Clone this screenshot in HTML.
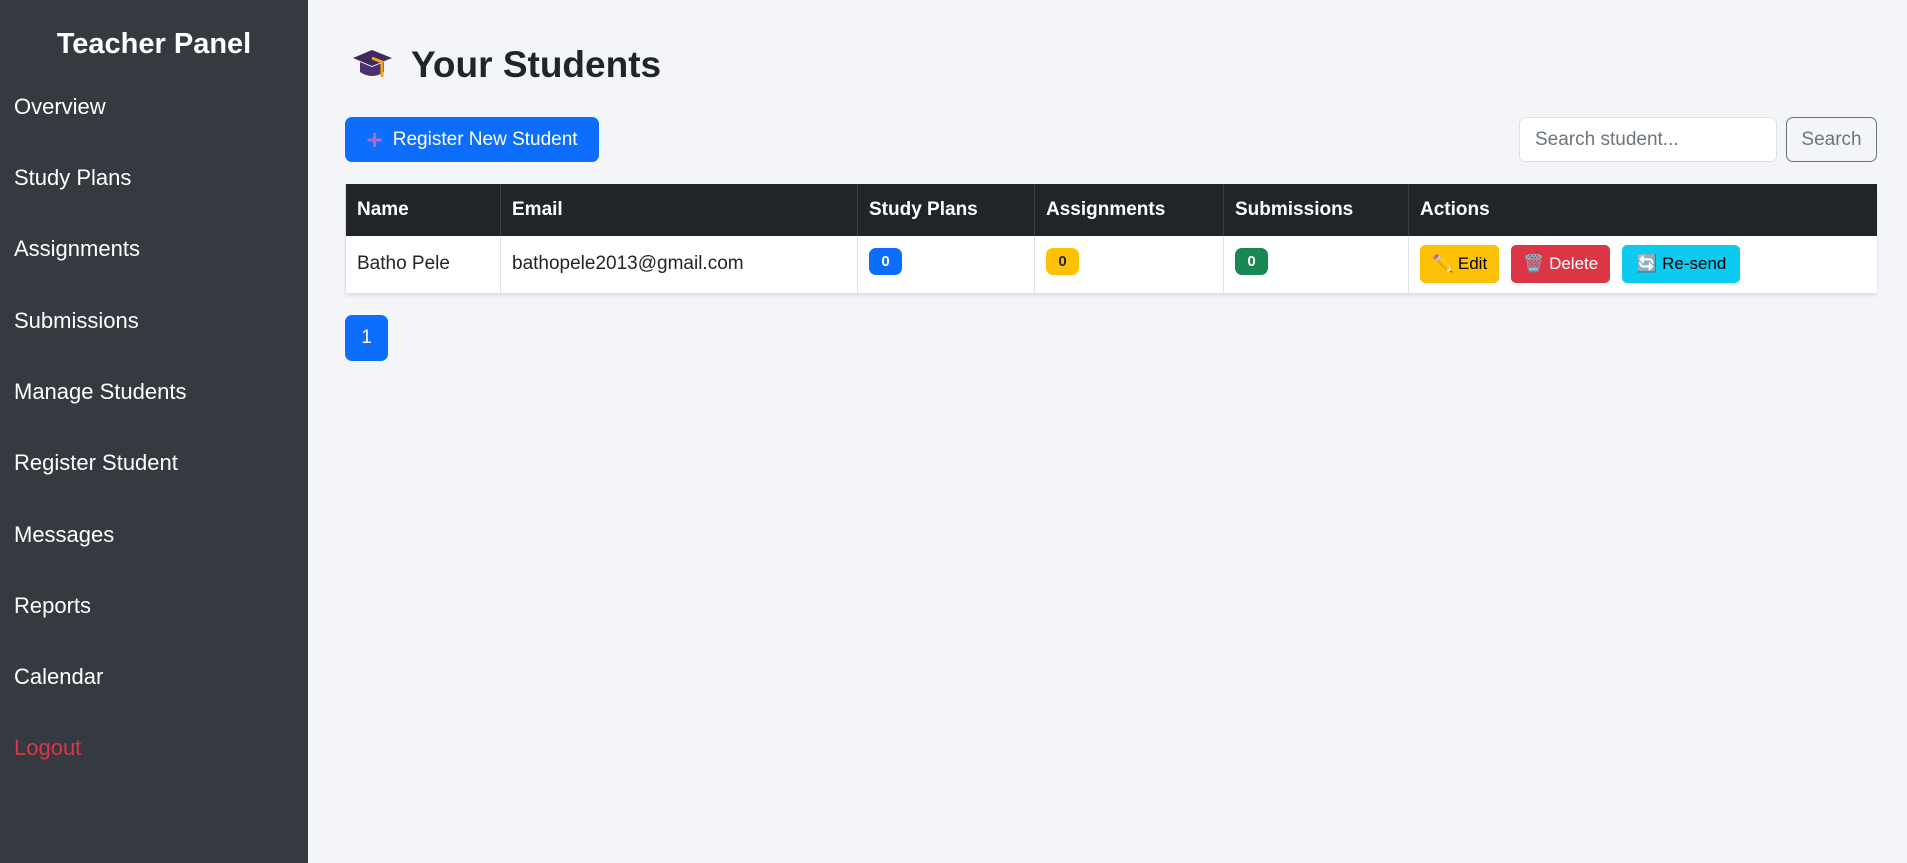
<!DOCTYPE html>
<html><head><meta charset="utf-8">
<style>
*{box-sizing:border-box;margin:0;padding:0}
body{width:1907px;height:863px;overflow:hidden;background:#f4f5f8;font-family:"Liberation Sans","DejaVu Sans",sans-serif;color:#212529;position:relative}
.side{position:absolute;left:0;top:0;width:308px;height:863px;background:#343a40;color:#fff}
.side h4{position:absolute;left:0;width:308px;top:28px;text-align:center;font-size:29px;font-weight:bold}
.side a{position:absolute;left:14px;font-size:22px;color:#fff;text-decoration:none;line-height:26px}
.abs{position:absolute}
h2{position:absolute;left:411px;top:41px;font-size:37px;font-weight:600;line-height:48px}
.btn{position:absolute;border-radius:7px;display:flex;align-items:center;justify-content:center;font-size:19px}
table{position:absolute;left:345px;top:184px;width:1532px;border-collapse:collapse;background:#fff;box-shadow:0 2px 3px rgba(0,0,0,.08)}
th{background:#212529;color:#fff;font-weight:bold;text-align:left;height:52px;padding:0 11px;font-size:19px;border-left:1px solid #3b4047}
td{height:57px;padding:0 11px;font-size:19px;border-left:1px solid #dee2e6;border-bottom:1px solid #dee2e6;vertical-align:middle}
th:first-child,td:first-child{border-left:1px solid #dee2e6}
.badge{display:inline-block;width:33px;height:27px;border-radius:7px;color:#fff;font-weight:bold;font-size:15px;text-align:center;line-height:27px;margin-top:-6px;vertical-align:middle}
.ab{display:inline-flex;align-items:center;height:38px;border-radius:5px;padding:0 12px;font-size:17px;margin-right:12px;vertical-align:middle}
</style></head><body>
<div class="side">
<h4>Teacher Panel</h4>
<a style="top:94px">Overview</a>
<a style="top:165px">Study Plans</a>
<a style="top:236px">Assignments</a>
<a style="top:308px">Submissions</a>
<a style="top:379px">Manage Students</a>
<a style="top:450px">Register Student</a>
<a style="top:522px">Messages</a>
<a style="top:593px">Reports</a>
<a style="top:664px">Calendar</a>
<a style="top:735px;color:#dc3545">Logout</a>
</div>
<svg class="abs" style="left:351px;top:46px" width="44" height="40" viewBox="0 0 44 40"><path d="M2 12 L21 4 L41 12 L21 20Z" fill="#3d2a5a"/><path d="M9 16 L9 26 Q21 34 33 26 L33 16 L21 21Z" fill="#4a3470"/><path d="M21 12 L31 16 L31 31" stroke="#f4a620" stroke-width="3" fill="none"/></svg>
<h2>Your Students</h2>
<div class="btn" style="left:345px;top:117px;width:254px;height:45px;background:#0d6efd;color:#fff"><span style="color:#b06acb;font-size:28px;margin-right:10px;font-weight:bold">+</span>Register New Student</div>
<div class="abs" style="left:1519px;top:117px;width:258px;height:45px;background:#fff;border:1px solid #dee2e6;border-radius:7px;font-size:19px;color:#6c757d;padding:11px 15px">Search student...</div>
<div class="btn" style="left:1786px;top:117px;width:91px;height:45px;border:1px solid #6c757d;color:#6c757d">Search</div>
<table>
<tr><th style="width:155px">Name</th><th style="width:357px">Email</th><th style="width:177px">Study Plans</th><th style="width:189px">Assignments</th><th style="width:185px">Submissions</th><th>Actions</th></tr>
<tr><td>Batho Pele</td><td>bathopele2013@gmail.com</td>
<td><span class="badge" style="background:#0d6efd">0</span></td>
<td><span class="badge" style="background:#ffc107;color:#212529">0</span></td>
<td><span class="badge" style="background:#198754">0</span></td>
<td><span class="ab" style="background:#ffc107;color:#000">✏️&nbsp;Edit</span><span class="ab" style="background:#dc3545;color:#fff">🗑️&nbsp;Delete</span><span class="ab" style="background:#0dcaf0;color:#000;padding:0 14px">🔄&nbsp;Re-send</span></td></tr>
</table>
<div class="btn" style="left:345px;top:315px;width:43px;height:46px;background:#0d6efd;color:#fff">1</div>
</body></html>
